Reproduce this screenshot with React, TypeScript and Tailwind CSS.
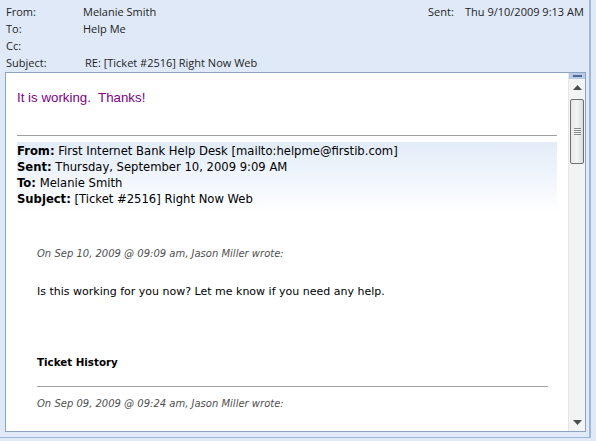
import React from "react";

const seg = { fontFamily: '"Open Sans", "Noto Sans", sans-serif' };
const tah = { fontFamily: '"DejaVu Sans", Verdana, sans-serif' };

function Scrollbar() {
  return (
    <div className="w-[17px] h-full flex flex-col bg-[#f3f3f3] border-l border-[#e6e6e6]">
      <div className="h-[6px] bg-[#b9cbe4] flex items-center justify-center">
        <div className="w-[9px] h-[2px] bg-[#4c6a94]" />
      </div>
      <div className="h-[17px] flex items-center justify-center">
        <svg width="9" height="5" viewBox="0 0 9 5"><path d="M0 5 L4.5 0 L9 5 Z" fill="#4d4d4d" /></svg>
      </div>
      <div className="mx-[1px] mt-[3px] h-[65px] rounded-[2px] border border-[#6f6f6f] bg-gradient-to-r from-[#e8e8e8] via-[#f4f4f4] to-[#dcdcdc] flex items-center justify-center">
        <div className="flex flex-col gap-[1px]">
          <div className="w-[7px] h-[1px] bg-[#8c8c8c]" />
          <div className="w-[7px] h-[1px] bg-[#8c8c8c]" />
          <div className="w-[7px] h-[1px] bg-[#8c8c8c]" />
          <div className="w-[7px] h-[1px] bg-[#8c8c8c]" />
        </div>
      </div>
      <div className="flex-1" />
      <div className="h-[17px] flex items-center justify-center">
        <svg width="9" height="5" viewBox="0 0 9 5"><path d="M0 0 L4.5 5 L9 0 Z" fill="#4d4d4d" /></svg>
      </div>
    </div>
  );
}

export default function App() {
  return (
    <div className="w-[596px] h-[441px] bg-[#dfe9f7] overflow-hidden">
      <div className="w-[591px] h-[438px] border-r-2 border-b border-[#9fb6d6]">
        <div className="text-[11px] text-[#1e1e1e] leading-[17px] pt-[3px] whitespace-nowrap" style={seg}>
          <div className="flex h-[17px]">
            <div className="w-[83px] pl-[6px]">From:</div>
            <div className="flex-1">Melanie Smith</div>
            <div className="w-[37px]">Sent:</div>
            <div className="w-[124px]">Thu 9/10/2009 9:13 AM</div>
          </div>
          <div className="flex h-[17px]">
            <div className="w-[83px] pl-[6px]">To:</div>
            <div>Help Me</div>
          </div>
          <div className="flex h-[17px]">
            <div className="w-[83px] pl-[6px]">Cc:</div>
          </div>
          <div className="flex h-[17px]">
            <div className="w-[85px] pl-[6px]">Subject:</div>
            <div>RE: [Ticket #2516] Right Now Web</div>
          </div>
        </div>
        <div className="ml-[5px] w-[581px] h-[360px] mt-[1px] border border-[#8ea3c3] bg-white flex">
          <div className="flex-1 overflow-hidden pl-[11px] pr-[11px] whitespace-nowrap">
            <div className="pt-[15px] h-[62px] text-[13.3px] text-[#800080]" style={{ fontFamily: '"Liberation Sans", Arial, sans-serif' }}>
              It is working.&nbsp; Thanks!
            </div>
            <div className="border-t border-[#a0a0a0]" />
            <div className="mt-[6px] pt-[1px] pb-[6px] bg-gradient-to-b from-[#e2ecf8] to-white text-[11.6px] leading-[16px] text-black" style={tah}>
              <div><b>From:</b> First Internet Bank Help Desk [mailto:helpme@firstib.com]</div>
              <div><b>Sent:</b> Thursday, September 10, 2009 9:09 AM</div>
              <div><b>To:</b> Melanie Smith</div>
              <div><b>Subject:</b> [Ticket #2516] Right Now Web</div>
            </div>
            <div className="pl-[20px] pr-[9px] text-[11px]" style={tah}>
              <div className="mt-[33px] italic text-[10px] text-[#4f4f4f]">On Sep 10, 2009 @ 09:09 am, Jason Miller wrote:</div>
              <div className="mt-[23px] text-black">Is this working for you now? Let me know if you need any help.</div>
              <div className="mt-[54px] font-bold text-[10.3px] text-black">Ticket History</div>
              <div className="mt-[16px] border-t border-[#a0a0a0]" />
              <div className="mt-[9px] italic text-[10px] text-[#4f4f4f]">On Sep 09, 2009 @ 09:24 am, Jason Miller wrote:</div>
            </div>
          </div>
          <Scrollbar />
        </div>
      </div>
    </div>
  );
}
